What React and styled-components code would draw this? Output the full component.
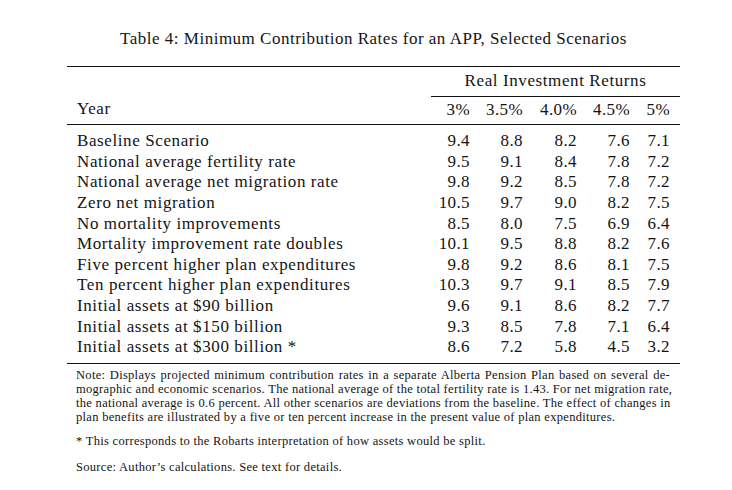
import React from "react";
import styled, { createGlobalStyle } from "styled-components";

const GlobalStyle = createGlobalStyle`
  html, body {
    margin: 0;
    padding: 0;
    background: #ffffff;
  }
  body {
    font-family: "Liberation Serif", "Times New Roman", serif;
    color: #141414;
  }
`;

const Page = styled.div`
  width: 732px;
  height: 490px;
  padding-top: 29px;
  box-sizing: border-box;
`;

const Wrapper = styled.div`
  width: 613px;
  margin-left: 67px;
`;

const Title = styled.h1`
  margin: 0 0 17px;
  font-size: 17px;
  font-weight: normal;
  line-height: 20px;
  letter-spacing: 0.5px;
  text-align: center;
  white-space: nowrap;
`;

const Table = styled.table`
  width: 100%;
  border-collapse: collapse;
  border-top: 1.2px solid #111;
  border-bottom: 1.2px solid #111;
  font-size: 17px;
  line-height: 20.6px;
  letter-spacing: 0.6px;
`;

const HeadRow = styled.tr`
  border-bottom: ${(p) => (p.$rule ? "1px solid #111" : "none")};
`;

const SpanCell = styled.td`
  text-align: center;
  padding: 4px 0 4px;
  border-bottom: 1px solid #111;
  white-space: nowrap;
`;

const LabelCell = styled.td`
  text-align: left;
  padding: ${(p) => p.$pad || "0"};
  padding-left: 10px;
  white-space: nowrap;
`;

const NumCell = styled.td`
  width: ${(p) => p.$w}px;
  text-align: right;
  padding: ${(p) => p.$pad || "0"};
  padding-left: 0;
  padding-right: ${(p) => (p.$end ? "10px" : "0")};
  white-space: nowrap;
  letter-spacing: 0.4px;
`;

const Notes = styled.div`
  padding: 4px 10px 0 9px;
  font-size: 12.5px;
  line-height: 14.2px;
  letter-spacing: 0.3px;
`;

const NoteLine = styled.div`
  text-align: justify;
  text-align-last: ${(p) => (p.$last ? "left" : "justify")};
  white-space: nowrap;
`;

const Footnote = styled.p`
  margin: ${(p) => p.$gap}px 0 0;
`;

const widths = [39, 53, 54, 53, 40];
const returns = ["3%", "3.5%", "4.0%", "4.5%", "5%"];

const rows = [
  ["Baseline Scenario", "9.4", "8.8", "8.2", "7.6", "7.1"],
  ["National average fertility rate", "9.5", "9.1", "8.4", "7.8", "7.2"],
  ["National average net migration rate", "9.8", "9.2", "8.5", "7.8", "7.2"],
  ["Zero net migration", "10.5", "9.7", "9.0", "8.2", "7.5"],
  ["No mortality improvements", "8.5", "8.0", "7.5", "6.9", "6.4"],
  ["Mortality improvement rate doubles", "10.1", "9.5", "8.8", "8.2", "7.6"],
  ["Five percent higher plan expenditures", "9.8", "9.2", "8.6", "8.1", "7.5"],
  ["Ten percent higher plan expenditures", "10.3", "9.7", "9.1", "8.5", "7.9"],
  ["Initial assets at $90 billion", "9.6", "9.1", "8.6", "8.2", "7.7"],
  ["Initial assets at $150 billion", "9.3", "8.5", "7.8", "7.1", "6.4"],
  ["Initial assets at $300 billion *", "8.6", "7.2", "5.8", "4.5", "3.2"],
];

const noteLines = [
  "Note: Displays projected minimum contribution rates in a separate Alberta Pension Plan based on several de-",
  "mographic and economic scenarios. The national average of the total fertility rate is 1.43. For net migration rate,",
  "the national average is 0.6 percent. All other scenarios are deviations from the baseline. The effect of changes in",
  "plan benefits are illustrated by a five or ten percent increase in the present value of plan expenditures.",
];

const rowPad = (i) => {
  if (i === 0) return "6px 0 0";
  if (i === rows.length - 1) return "0 0 5px";
  return "0";
};

const App = () => {
  return (
    <>
      <GlobalStyle />
      <Page>
        <Wrapper>
          <Title>
            Table 4: Minimum Contribution Rates for an APP, Selected Scenarios
          </Title>
          <Table>
            <thead>
              <tr>
                <LabelCell $pad="4px 0" />
                <SpanCell colSpan={5}>Real Investment Returns</SpanCell>
              </tr>
              <HeadRow $rule>
                <LabelCell $pad="3px 0 4px">Year</LabelCell>
                {returns.map((r, i) => (
                  <NumCell key={r} $w={widths[i]} $pad="3px 0 4px" $end={i === 4}>
                    {r}
                  </NumCell>
                ))}
              </HeadRow>
            </thead>
            <tbody>
              {rows.map((row, i) => (
                <tr key={row[0]}>
                  <LabelCell $pad={rowPad(i)}>{row[0]}</LabelCell>
                  {row.slice(1).map((v, j) => (
                    <NumCell key={j} $w={widths[j]} $pad={rowPad(i)} $end={j === 4}>
                      {v}
                    </NumCell>
                  ))}
                </tr>
              ))}
            </tbody>
          </Table>
          <Notes>
            {noteLines.map((line, i) => (
              <NoteLine key={i} $last={i === noteLines.length - 1}>
                {line}
              </NoteLine>
            ))}
            <Footnote $gap={9}>
              * This corresponds to the Robarts interpretation of how assets would be split.
            </Footnote>
            <Footnote $gap={12}>Source: Author’s calculations. See text for details.</Footnote>
          </Notes>
        </Wrapper>
      </Page>
    </>
  );
};

export default App;
